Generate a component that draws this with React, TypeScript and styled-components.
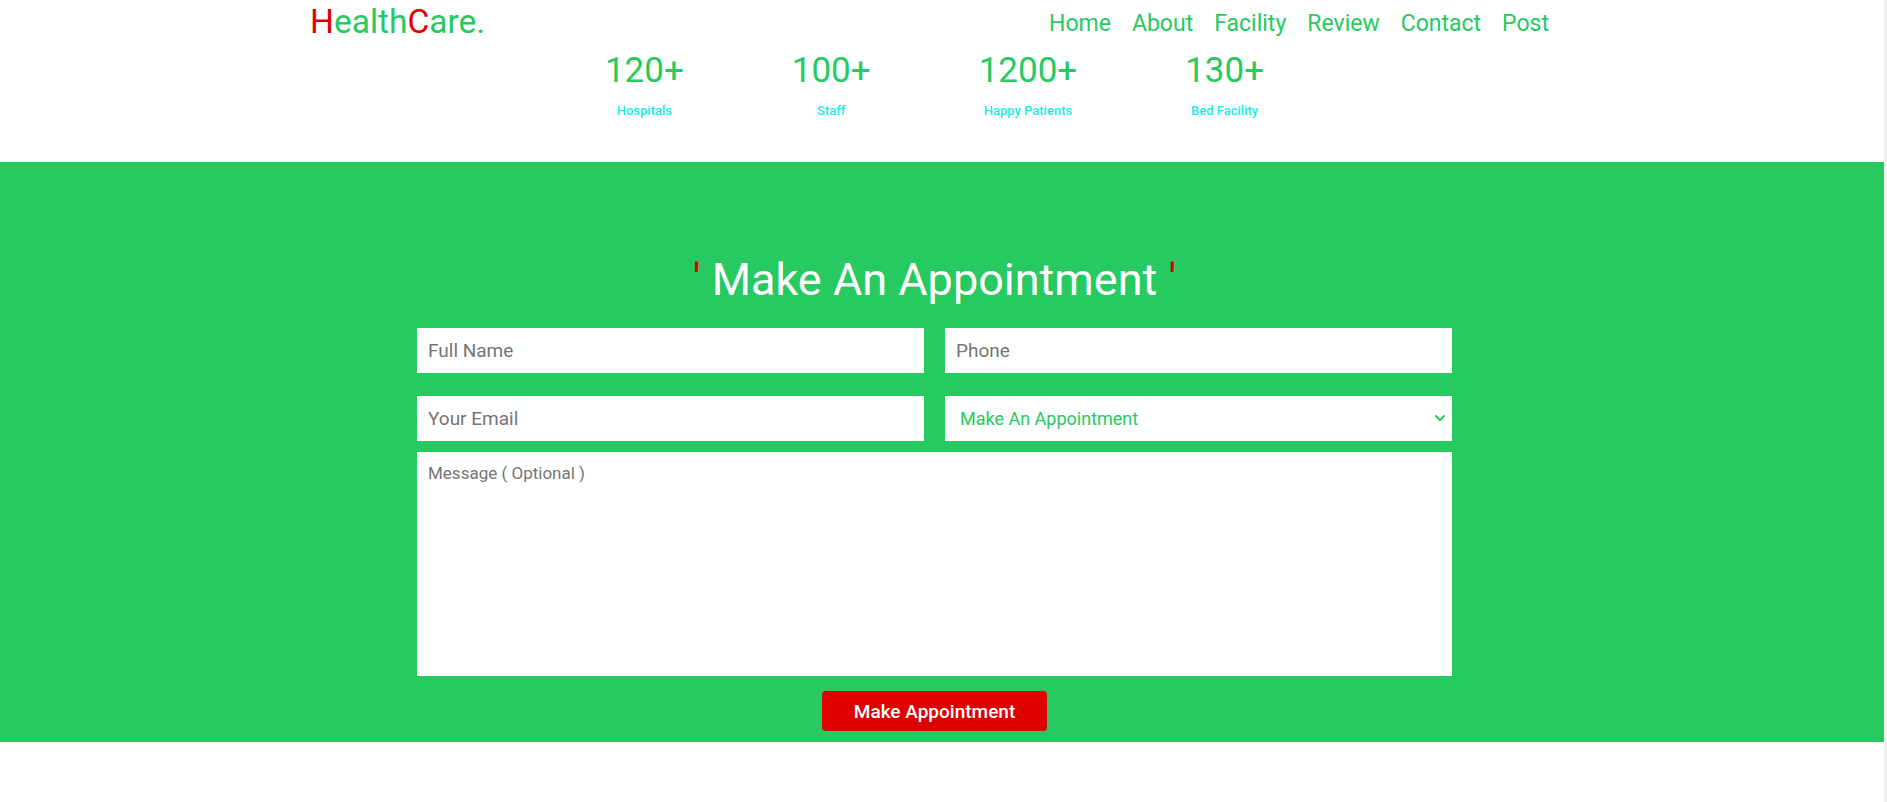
import React, { useState } from 'react';
import styled, { createGlobalStyle } from 'styled-components';

const GREEN = '#26ca60';
const RED = '#e00000';

const stats = [
  { value: '120+', label: 'Hospitals' },
  { value: '100+', label: 'Staff' },
  { value: '1200+', label: 'Happy Patients' },
  { value: '130+', label: 'Bed Facility' },
];

const links = ['Home', 'About', 'Facility', 'Review', 'Contact', 'Post'];

const App: React.FC = () => {
  const [form, setForm] = useState({ name: '', phone: '', mail: '', kind: 'Make An Appointment', message: '' });

  const update = (key: keyof typeof form) => (e: React.ChangeEvent<HTMLInputElement | HTMLSelectElement | HTMLTextAreaElement>) =>
    setForm((prev) => ({ ...prev, [key]: e.target.value }));

  return (
    <Page>
      <GlobalStyle />
      <Header>
        <Logo>
          <Red>H</Red>ealth<Red>C</Red>are.
        </Logo>
        <Nav>
          {links.map((link) => (
            <NavLink key={link} href={`#${link.toLowerCase()}`}>
              {link}
            </NavLink>
          ))}
        </Nav>
      </Header>

      <Stats>
        {stats.map((s) => (
          <Stat key={s.label}>
            <StatValue>{s.value}</StatValue>
            <StatLabel>{s.label}</StatLabel>
          </Stat>
        ))}
      </Stats>

      <Appointment>
        <Title>
          <Red>'</Red> Make An Appointment <Red>'</Red>
        </Title>
        <Form onSubmit={(e) => e.preventDefault()}>
          <Row>
            <Field type="text" placeholder="Full Name" value={form.name} onChange={update('name')} />
            <Field type="text" placeholder="Phone" value={form.phone} onChange={update('phone')} />
          </Row>
          <Row>
            <Field type="email" placeholder="Your Email" value={form.mail} onChange={update('mail')} />
            <SelectWrap>
              <Select value={form.kind} onChange={update('kind')}>
                <option>Make An Appointment</option>
                <option>General Checkup</option>
                <option>Dental Care</option>
                <option>Eye Care</option>
              </Select>
              <Chevron width="12" height="8" viewBox="0 0 12 8">
                <path d="M1.5 1.5 L6 6 L10.5 1.5" fill="none" stroke={GREEN} strokeWidth="2" />
              </Chevron>
            </SelectWrap>
          </Row>
          <Message placeholder="Message ( Optional )" value={form.message} onChange={update('message')} />
          <Submit type="submit">Make Appointment</Submit>
        </Form>
      </Appointment>
    </Page>
  );
};

export default App;

const GlobalStyle = createGlobalStyle`
  * {
    box-sizing: border-box;
  }
  body {
    margin: 0;
    background: #fff;
    font-family: Roboto, 'Liberation Sans', sans-serif;
  }
`;

const Page = styled.div`
  min-height: 802px;
  border-right: 3px solid #f1f1f1;
`;

const Red = styled.span`
  color: ${RED};
`;

const Header = styled.header`
  display: flex;
  justify-content: space-between;
  align-items: center;
  height: 43px;
  padding: 0 335px 0 310px;
`;

const Logo = styled.div`
  font-size: 33.5px;
  color: ${GREEN};
`;

const Nav = styled.nav`
  display: flex;
  gap: 21px;
  margin-top: 4px;
`;

const NavLink = styled.a`
  font-size: 23px;
  color: ${GREEN};
  text-decoration: none;
`;

const Stats = styled.div`
  display: flex;
  justify-content: center;
  gap: 108px;
  margin: 7px 0 0;
  padding: 0 15px 44px 0;
`;

const Stat = styled.div`
  display: flex;
  flex-direction: column;
  align-items: center;
`;

const StatValue = styled.span`
  font-size: 35px;
  color: ${GREEN};
`;

const StatLabel = styled.span`
  margin-top: 12px;
  font-size: 13px;
  font-weight: 500;
  color: #17efe9;
`;

const Appointment = styled.section`
  background: ${GREEN};
  padding: 91px 15px 11px 0;
`;

const Title = styled.h2`
  margin: 0 0 22px;
  text-align: center;
  font-size: 45px;
  font-weight: 400;
  color: #fff;
`;

const Form = styled.form`
  width: 1035px;
  margin: 0 auto;
  display: flex;
  flex-direction: column;
  align-items: center;
`;

const Row = styled.div`
  display: grid;
  grid-template-columns: 1fr 1fr;
  gap: 21px;
  width: 100%;
  margin-bottom: 23px;

  &:nth-of-type(2) {
    margin-bottom: 11px;
  }
`;

const Field = styled.input`
  height: 45px;
  padding: 0 11px;
  border: none;
  outline: none;
  background: #fff;
  font-family: inherit;
  font-size: 19px;

  &::placeholder {
    color: #757575;
  }
`;

const SelectWrap = styled.div`
  position: relative;
`;

const Select = styled.select`
  width: 100%;
  height: 45px;
  padding: 0 15px;
  border: none;
  outline: none;
  background: #fff;
  appearance: none;
  font-family: inherit;
  font-size: 18px;
  color: ${GREEN};
`;

const Chevron = styled.svg`
  position: absolute;
  right: 6px;
  top: 18px;
  pointer-events: none;
`;

const Message = styled.textarea`
  width: 100%;
  height: 224px;
  padding: 11px;
  border: none;
  outline: none;
  resize: none;
  font-family: inherit;
  font-size: 17px;

  &::placeholder {
    color: #757575;
  }
`;

const Submit = styled.button`
  width: 225px;
  height: 40px;
  margin-top: 15px;
  border: none;
  border-radius: 4px;
  background: #df0000;
  color: #fff;
  font-family: inherit;
  font-size: 19px;
  font-weight: 500;
  cursor: pointer;
`;
